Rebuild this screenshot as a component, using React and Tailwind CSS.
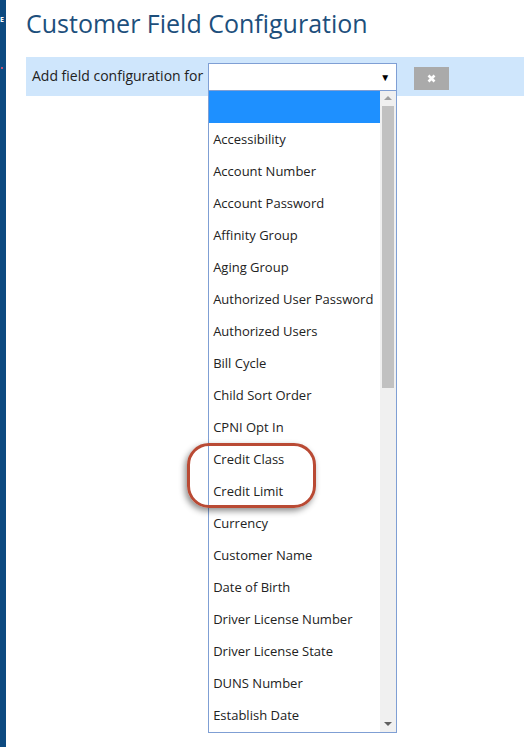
import React from "react";

const items = [
  "",
  "Accessibility",
  "Account Number",
  "Account Password",
  "Affinity Group",
  "Aging Group",
  "Authorized User Password",
  "Authorized Users",
  "Bill Cycle",
  "Child Sort Order",
  "CPNI Opt In",
  "Credit Class",
  "Credit Limit",
  "Currency",
  "Customer Name",
  "Date of Birth",
  "Driver License Number",
  "Driver License State",
  "DUNS Number",
  "Establish Date",
];

export default function App() {
  return (
    <div
      className="flex h-[747px] w-[524px] overflow-hidden bg-white text-[#222]"
      style={{ fontFamily: '"Open Sans", "Noto Sans", sans-serif' }}
    >
      {/* side nav strip */}
      <div className="relative w-[6px] shrink-0 bg-[#0d4a80]">
        <span className="absolute left-0 top-[16px] text-[7px] font-bold leading-none text-white">
          E
        </span>
        <span className="absolute left-[1px] top-[67px] h-[2px] w-[2px] bg-[#c05070]" />
      </div>

      <div className="relative flex-1 pl-[20px]">
        <h1 className="mt-[5px] text-[25px] leading-[36px] text-[#1d4f7c]">
          Customer Field Configuration
        </h1>

        <div className="mt-[16px] flex h-[39px] items-start bg-[#cfe6fc] pl-[6px]">
          <span className="mt-[10px] text-[14px] leading-[18px]">
            Add field configuration for
          </span>
          <div className="ml-[5px] mt-[6px] w-[189px]">
            <div className="flex h-[28px] items-center justify-end border border-[#7f9fd4] bg-white pr-[6px]">
              <span className="text-[10px] leading-none text-black">▼</span>
            </div>
            <div className="flex h-[642px] border border-t-0 border-[#7f9fd4] bg-white">
              <ul className="flex-1">
                {items.map((it, i) => (
                  <li
                    key={i}
                    className={
                      "h-[32px] pl-[4px] text-[13px] leading-[32px] " +
                      (i === 0 ? "bg-[#1e90ff]" : "")
                    }
                  >
                    {it}
                  </li>
                ))}
              </ul>
              <div className="flex w-[16px] flex-col items-center bg-[#f0f0f0]">
                <span className="mt-[5px] h-0 w-0 border-x-[4px] border-b-[4px] border-x-transparent border-b-[#a0a0a0]" />
                <div className="mt-[6px] h-[282px] w-[12px] bg-[#c1c1c1]" />
                <div className="flex-1" />
                <span className="mb-[6px] h-0 w-0 border-x-[4px] border-t-[4px] border-x-transparent border-t-[#606060]" />
              </div>
            </div>
          </div>
          <button className="ml-[17px] mt-[10px] flex h-[23px] w-[35px] items-center justify-center bg-[#aaaaaa]">
            <svg width="9" height="9" viewBox="0 0 9 9">
              <path d="M1.5 1.5 L7.5 7.5 M7.5 1.5 L1.5 7.5" stroke="white" strokeWidth="2.6" />
            </svg>
          </button>
        </div>

        {/* annotation around Credit Class / Credit Limit */}
        <div className="absolute left-[181px] top-[443px] h-[65px] w-[129px] rounded-[22px] border-[3px] border-[#b94a34] shadow-[-2px_3px_6px_rgba(0,0,0,0.45)]" />
      </div>
    </div>
  );
}
